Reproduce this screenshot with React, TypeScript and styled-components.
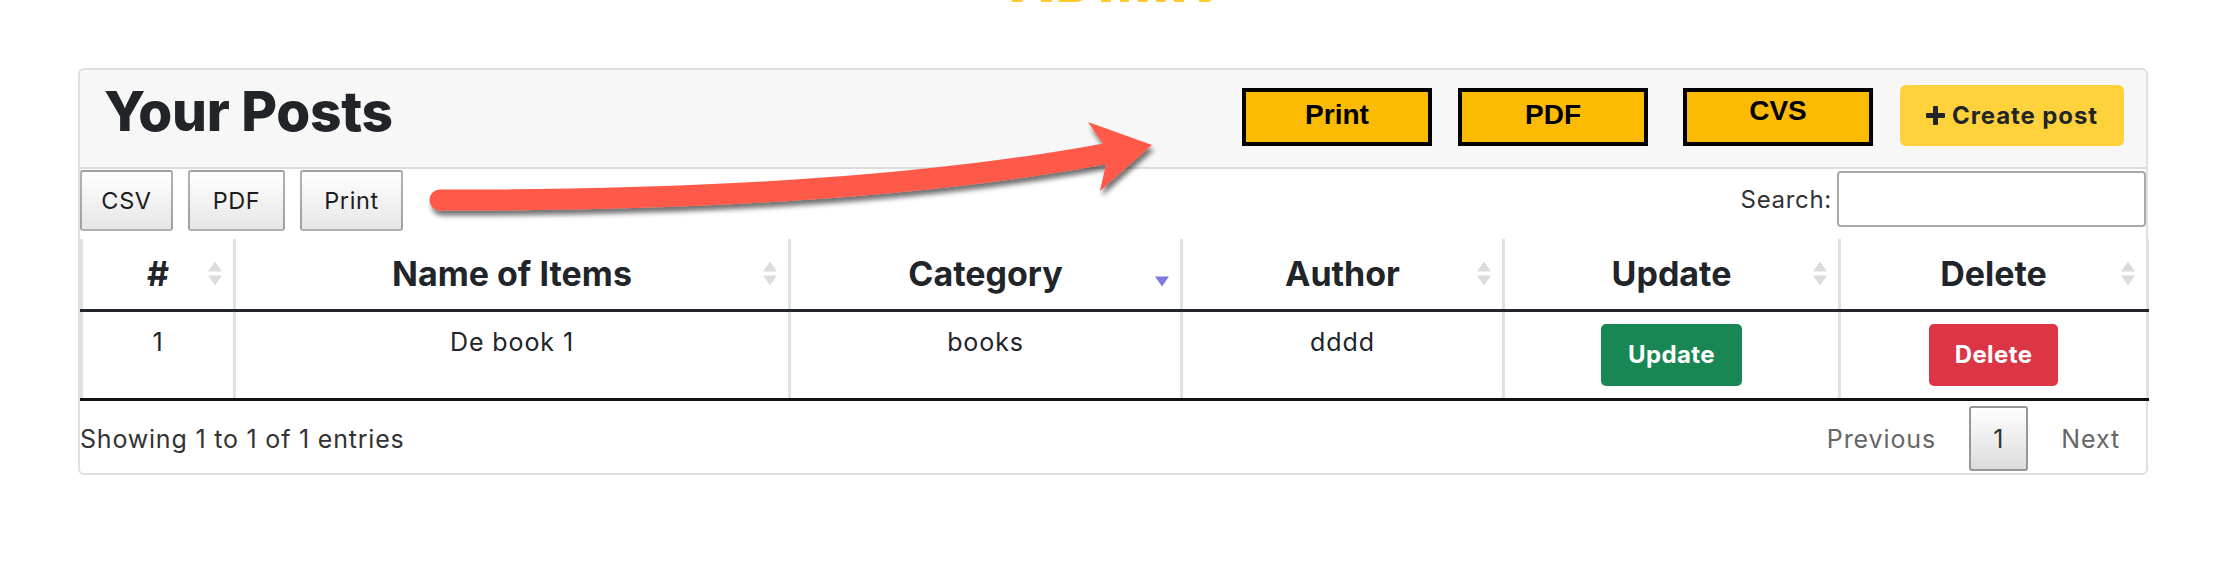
import React from "react";
import styled, { createGlobalStyle } from "styled-components";

const GlobalStyle = createGlobalStyle`
  html, body { margin: 0; padding: 0; background: #ffffff; }
  body { font-family: Inter, "Noto Sans", sans-serif; color: #212529; }
  * { box-sizing: border-box; }
`;

const Page = styled.div`
  width: 2232px;
  height: 570px;
  overflow: hidden;
  padding-left: 78px;
`;

const Banner = styled.div`
  width: 2070px;
  height: 68px;
  display: flex;
  justify-content: center;
  overflow: hidden;
`;

const BannerText = styled.h1`
  margin: -46px 0 0 0;
  font-size: 56px;
  line-height: 56px;
  font-weight: 800;
  color: #fdc92e;
  letter-spacing: 2px;
  height: 56px;
`;

const Card = styled.div`
  position: relative;
  width: 2070px;
  border: 2px solid #e0e0e0;
  border-radius: 6px;
  background: #fff;
`;

const CardHeader = styled.div`
  height: 99px;
  background: #f7f7f7;
  border-bottom: 2px solid #dcdcdc;
  border-radius: 5px 5px 0 0;
  display: flex;
  align-items: center;
  padding: 0 22px 0 24px;
`;

const Title = styled.h2`
  margin: 0 0 16px 0;
  font-size: 55px;
  line-height: 1.2;
  font-weight: 800;
  color: #212529;
  letter-spacing: -0.3px;
`;

const HeaderActions = styled.div`
  margin-left: auto;
  margin-bottom: 7px;
  display: flex;
  align-items: center;
`;

const ExportButton = styled.button<{ $gap: number; $lift: number }>`
  width: 190px;
  height: 58px;
  margin-left: ${(p) => p.$gap}px;
  margin-top: 4px;
  background: #fbbb02;
  border: 4px solid #000;
  font-family: "Liberation Sans", Arial, sans-serif;
  font-weight: 700;
  font-size: 28px;
  color: #000;
  padding: 0 0 ${(p) => p.$lift}px 0;
  cursor: pointer;
`;

const CreateButton = styled.button`
  margin-left: 27px;
  width: 224px;
  height: 61px;
  background: #ffd23b;
  border: none;
  border-radius: 6px;
  display: flex;
  align-items: center;
  justify-content: center;
  gap: 7px;
  font-family: Inter, sans-serif;
  font-weight: 700;
  font-size: 24px;
  letter-spacing: 0.9px;
  color: #212529;
  cursor: pointer;
`;

const Toolbar = styled.div`
  height: 70px;
  display: flex;
  justify-content: space-between;
  align-items: flex-start;
`;

const ToolGroup = styled.div`
  display: flex;
  gap: 15px;
  padding-top: 1px;
`;

const ToolButton = styled.button<{ $w: number }>`
  width: ${(p) => p.$w}px;
  height: 61px;
  border: 2px solid rgba(0, 0, 0, 0.3);
  border-radius: 3px;
  background: linear-gradient(to bottom, #ffffff 0%, #e6e6e6 100%);
  font-family: Inter, sans-serif;
  font-size: 23.5px;
  color: #1d1d1d;
  letter-spacing: 0.6px;
  cursor: pointer;
`;

const SearchLabel = styled.label`
  display: flex;
  align-items: center;
  gap: 5px;
  padding-top: 2px;
  font-size: 24px;
  color: #333;
  letter-spacing: 0.7px;
`;

const SearchInput = styled.input`
  width: 309px;
  height: 56px;
  border: 2px solid #aaa;
  border-radius: 4px;
  background: #fff;
  outline: none;
`;

const Table = styled.table`
  width: 100%;
  border-collapse: collapse;
  table-layout: fixed;
`;

const Th = styled.th`
  position: relative;
  height: 71px;
  padding: 0 30px;
  font-size: 34px;
  font-weight: 700;
  color: #212529;
  text-align: center;
  border-left: 3px solid #dee2e6;
  border-bottom: 3px solid #212529;
  &:last-child { border-right: 3px solid #dee2e6; }
`;

const Td = styled.td`
  height: 85px;
  padding: 12px 10px;
  vertical-align: top;
  text-align: center;
  font-size: 25px;
  line-height: 1.45;
  color: #212529;
  letter-spacing: 0.9px;
  border-left: 3px solid #dee2e6;
  border-bottom: 3px solid #111;
  &:last-child { border-right: 3px solid #dee2e6; }
`;

const SortMark = styled.svg`
  position: absolute;
  right: 11px;
  top: 50%;
  transform: translateY(-50%);
`;

const ActionButton = styled.button<{ $bg: string; $w: number }>`
  width: ${(p) => p.$w}px;
  height: 62px;
  border: none;
  border-radius: 5px;
  background: ${(p) => p.$bg};
  color: #fff;
  font-family: Inter, sans-serif;
  font-weight: 700;
  font-size: 24px;
  letter-spacing: 0.4px;
  cursor: pointer;
`;

const Footer = styled.div`
  height: 72px;
  display: flex;
  align-items: center;
  justify-content: space-between;
  padding: 4px 2px 0 0;
`;

const Info = styled.div`
  font-size: 25px;
  color: #333;
  letter-spacing: 0.8px;
`;

const Pager = styled.div`
  display: flex;
  align-items: center;
  gap: 9px;
`;

const PageItem = styled.span<{ $current?: boolean }>`
  display: flex;
  align-items: center;
  height: 65px;
  padding: 0 22px;
  font-size: 25px;
  letter-spacing: 0.9px;
  color: ${(p) => (p.$current ? "#333" : "#666")};
  border: 2px solid ${(p) => (p.$current ? "#979797" : "transparent")};
  border-radius: 3px;
  background: ${(p) =>
    p.$current ? "linear-gradient(to bottom, #ffffff 0%, #dcdcdc 100%)" : "transparent"};
`;

const Overlay = styled.svg`
  position: absolute;
  left: -2px;
  top: -2px;
  pointer-events: none;
  overflow: visible;
`;

function Sort({ mode }: { mode: "both" | "desc" }) {
  return (
    <SortMark width="14" height="25" viewBox="0 0 14 25">
      {mode === "both" && <polygon points="7,0 14,10 0,10" fill="#dcdcdc" />}
      <polygon
        points="0,14 14,14 7,24"
        fill={mode === "desc" ? "#7b7be2" : "#dcdcdc"}
        transform={mode === "desc" ? "translate(0,1)" : undefined}
      />
    </SortMark>
  );
}

function PlusIcon() {
  return (
    <svg width="19" height="19" viewBox="0 0 19 19">
      <rect x="7" y="0" width="5" height="19" rx="1" fill="#212529" />
      <rect x="0" y="7" width="19" height="5" rx="1" fill="#212529" />
    </svg>
  );
}

const columns = [
  { label: "#", width: 153, sort: "both" as const },
  { label: "Name of Items", width: 555, sort: "both" as const },
  { label: "Category", width: 392, sort: "desc" as const },
  { label: "Author", width: 322, sort: "both" as const },
  { label: "Update", width: 336, sort: "both" as const },
  { label: "Delete", width: 308, sort: "both" as const },
];

export default function App() {
  return (
    <>
      <GlobalStyle />
      <Page>
        <Banner>
          <BannerText>ADMIN</BannerText>
        </Banner>
        <Card>
          <CardHeader>
            <Title>Your Posts</Title>
            <HeaderActions>
              <ExportButton $gap={0} $lift={4}>Print</ExportButton>
              <ExportButton $gap={26} $lift={4}>PDF</ExportButton>
              <ExportButton $gap={35} $lift={12}>CVS</ExportButton>
              <CreateButton>
                <PlusIcon />
                Create post
              </CreateButton>
            </HeaderActions>
          </CardHeader>
          <Toolbar>
            <ToolGroup>
              <ToolButton $w={93}>CSV</ToolButton>
              <ToolButton $w={97}>PDF</ToolButton>
              <ToolButton $w={103}>Print</ToolButton>
            </ToolGroup>
            <SearchLabel>
              Search:
              <SearchInput type="search" />
            </SearchLabel>
          </Toolbar>
          <Table>
            <colgroup>
              {columns.map((c) => (
                <col key={c.label} style={{ width: c.width }} />
              ))}
            </colgroup>
            <thead>
              <tr>
                {columns.map((c) => (
                  <Th key={c.label}>
                    {c.label}
                    <Sort mode={c.sort} />
                  </Th>
                ))}
              </tr>
            </thead>
            <tbody>
              <tr>
                <Td>1</Td>
                <Td>De book 1</Td>
                <Td>books</Td>
                <Td>dddd</Td>
                <Td>
                  <ActionButton $bg="#198754" $w={141}>Update</ActionButton>
                </Td>
                <Td>
                  <ActionButton $bg="#dc3545" $w={129}>Delete</ActionButton>
                </Td>
              </tr>
            </tbody>
          </Table>
          <Footer>
            <Info>Showing 1 to 1 of 1 entries</Info>
            <Pager>
              <PageItem>Previous</PageItem>
              <PageItem $current>1</PageItem>
              <PageItem>Next</PageItem>
            </Pager>
          </Footer>
          <Overlay width="2070" height="407" viewBox="78 68 2070 407">
            <defs>
              <filter id="arrowShadow" x="-10%" y="-50%" width="120%" height="200%">
                <feDropShadow dx="2" dy="5" stdDeviation="2.5" floodColor="#000" floodOpacity="0.55" />
              </filter>
            </defs>
            <g filter="url(#arrowShadow)">
              <path
                d="M 440 200 Q 850 201 1104 154"
                stroke="#ff5a4a"
                strokeWidth="21"
                strokeLinecap="round"
                fill="none"
              />
              <polygon points="1103,144 1088,122 1152,145 1100,191 1106,164" fill="#ff5a4a" />
            </g>
          </Overlay>
        </Card>
      </Page>
    </>
  );
}
